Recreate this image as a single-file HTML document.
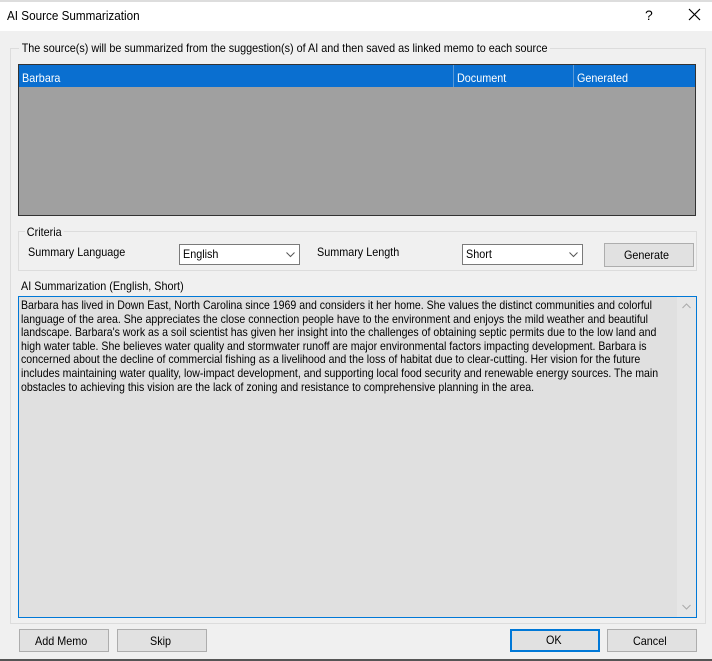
<!DOCTYPE html>
<html><head><style>
*{margin:0;padding:0;box-sizing:border-box}
body{width:712px;height:661px;background:#f0f0f0;font-family:"Liberation Sans",sans-serif;font-size:12px;color:#000;position:relative;overflow:hidden}
.a{position:absolute;white-space:nowrap}
.sq{transform:scaleX(0.9);transform-origin:left top}
.btn{position:absolute;background:#e1e1e1;border:1px solid #adadad;text-align:center;line-height:22px}
.combo{position:absolute;background:#fff;border:1px solid #7a7a7a;height:21px;padding-left:3px;line-height:19px}
.combo svg{position:absolute;right:4px;top:7px}
</style></head><body>
<div class="a" style="left:0;top:0;width:712px;height:31px;background:#fff"></div>
<div class="a sq" style="left:7px;top:8px;font-size:13px">AI Source Summarization</div>
<div class="a" style="left:645px;top:7px;font-size:14px">?</div>
<svg class="a" style="left:688px;top:8px" width="13" height="13"><path d="M1 1L12 12M12 1L1 12" stroke="#000" stroke-width="1.2"/></svg>
<div class="a" style="left:0;top:0;width:712px;height:2px;background:#ddd"></div>

<div class="a" style="left:10px;top:48px;width:696px;height:576px;border:1px solid #dcdcdc"></div>
<div class="a sq" style="left:19px;top:41px;background:#f0f0f0;padding:0 3px">The source(s) will be summarized from the suggestion(s) of AI and then saved as linked memo to each source</div>

<div class="a" style="left:18px;top:64px;width:678px;height:152px;background:#a0a0a0;border:1px solid #333"></div>
<div class="a" style="left:19px;top:65px;width:676px;height:22px;background:#0a6fd0"></div>
<div class="a" style="left:453px;top:65px;width:1px;height:22px;background:#5a9ad8"></div>
<div class="a" style="left:573px;top:65px;width:1px;height:22px;background:#5a9ad8"></div>
<div class="a sq" style="left:22px;top:71px;color:#fff">Barbara</div>
<div class="a sq" style="left:457px;top:71px;color:#fff">Document</div>
<div class="a sq" style="left:577px;top:71px;color:#fff">Generated</div>

<div class="a" style="left:18px;top:231px;width:679px;height:40px;border:1px solid #dcdcdc"></div>
<div class="a sq" style="left:25px;top:225px;background:#f0f0f0;padding:0 2px">Criteria</div>
<div class="a sq" style="left:28px;top:245px">Summary Language</div>
<div class="combo" style="left:179px;top:244px;width:121px"><span class="sq" style="display:inline-block">English</span><svg width="9" height="6"><path d="M0.5 0.5L4.5 4.5L8.5 0.5" stroke="#555" fill="none"/></svg></div>
<div class="a sq" style="left:317px;top:245px">Summary Length</div>
<div class="combo" style="left:462px;top:244px;width:121px"><span class="sq" style="display:inline-block">Short</span><svg width="9" height="6"><path d="M0.5 0.5L4.5 4.5L8.5 0.5" stroke="#555" fill="none"/></svg></div>
<div class="btn" style="left:604px;top:243px;width:90px;height:24px"><span class="sq" style="display:inline-block">Generate</span></div>

<div class="a sq" style="left:21px;top:279px">AI Summarization (English, Short)</div>
<div class="a" style="left:18px;top:296px;width:679px;height:322px;background:#e0e0e0;border:1px solid #0078d7"></div>
<div class="a" style="left:677px;top:297px;width:19px;height:320px;background:#e6e6e6"></div>
<svg class="a" style="left:682px;top:303px" width="9" height="6"><path d="M0.5 5L4.5 1L8.5 5" stroke="#aaa" fill="none"/></svg>
<svg class="a" style="left:682px;top:604px" width="9" height="6"><path d="M0.5 1L4.5 5L8.5 1" stroke="#aaa" fill="none"/></svg>
<div class="a sq" style="left:21px;top:299px;line-height:13.6px;transform:scaleX(0.88)">Barbara has lived in Down East, North Carolina since 1969 and considers it her home. She values the distinct communities and colorful<br>language of the area. She appreciates the close connection people have to the environment and enjoys the mild weather and beautiful<br>landscape. Barbara's work as a soil scientist has given her insight into the challenges of obtaining septic permits due to the low land and<br>high water table. She believes water quality and stormwater runoff are major environmental factors impacting development. Barbara is<br>concerned about the decline of commercial fishing as a livelihood and the loss of habitat due to clear-cutting. Her vision for the future<br>includes maintaining water quality, low-impact development, and supporting local food security and renewable energy sources. The main<br>obstacles to achieving this vision are the lack of zoning and resistance to comprehensive planning in the area.</div>

<div class="btn" style="left:19px;top:629px;width:90px;height:23px"><span class="sq" style="display:inline-block">Add Memo</span></div>
<div class="btn" style="left:117px;top:629px;width:90px;height:23px"><span class="sq" style="display:inline-block">Skip</span></div>
<div class="btn" style="left:510px;top:629px;width:90px;height:23px;border:2px solid #0078d7;line-height:19px"><span class="sq" style="display:inline-block">OK</span></div>
<div class="btn" style="left:607px;top:629px;width:90px;height:23px"><span class="sq" style="display:inline-block">Cancel</span></div>
<div class="a" style="left:0;top:659px;width:712px;height:2px;background:#555"></div>
</body></html>
